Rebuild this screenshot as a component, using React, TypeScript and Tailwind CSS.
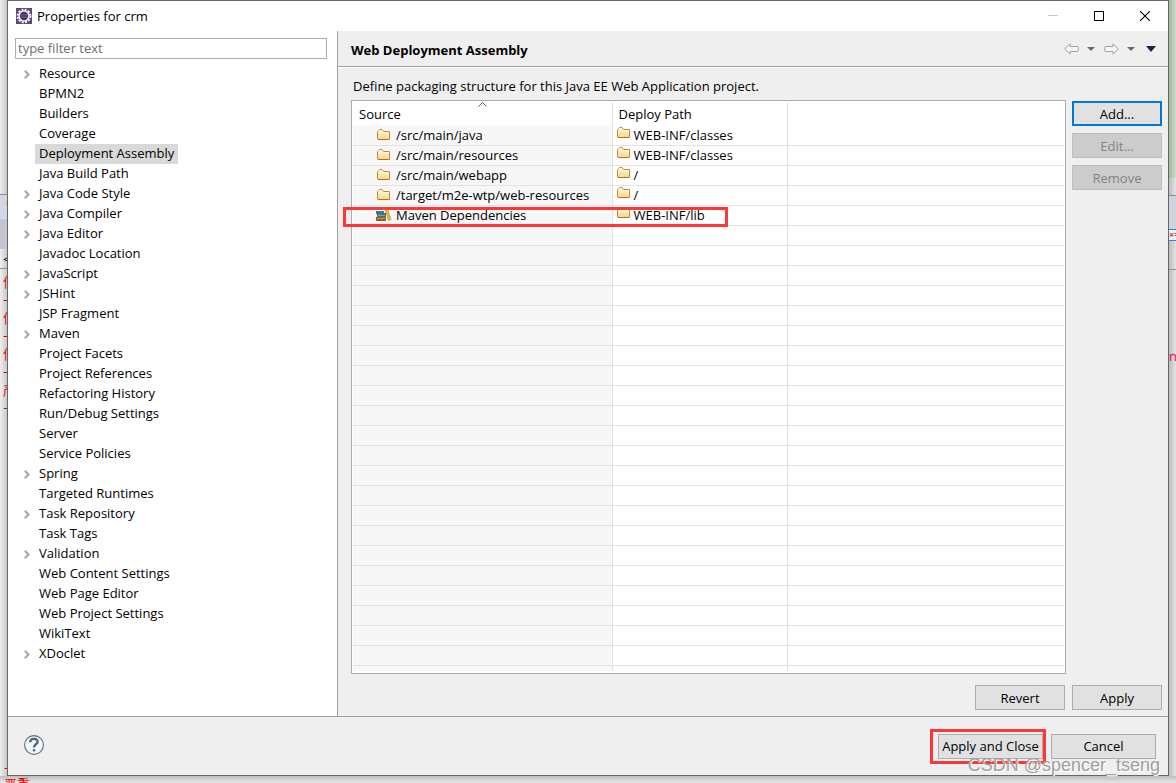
import React from 'react';

interface TreeNode {
  label: string;
  expandable?: boolean;
}

interface Mapping {
  source: string;
  path: string;
  library?: boolean;
}

const tree: TreeNode[] = [
  { label: 'Resource', expandable: true },
  { label: 'BPMN2' },
  { label: 'Builders' },
  { label: 'Coverage' },
  { label: 'Deployment Assembly' },
  { label: 'Java Build Path' },
  { label: 'Java Code Style', expandable: true },
  { label: 'Java Compiler', expandable: true },
  { label: 'Java Editor', expandable: true },
  { label: 'Javadoc Location' },
  { label: 'JavaScript', expandable: true },
  { label: 'JSHint', expandable: true },
  { label: 'JSP Fragment' },
  { label: 'Maven', expandable: true },
  { label: 'Project Facets' },
  { label: 'Project References' },
  { label: 'Refactoring History' },
  { label: 'Run/Debug Settings' },
  { label: 'Server' },
  { label: 'Service Policies' },
  { label: 'Spring', expandable: true },
  { label: 'Targeted Runtimes' },
  { label: 'Task Repository', expandable: true },
  { label: 'Task Tags' },
  { label: 'Validation', expandable: true },
  { label: 'Web Content Settings' },
  { label: 'Web Page Editor' },
  { label: 'Web Project Settings' },
  { label: 'WikiText' },
  { label: 'XDoclet', expandable: true },
];

const mappings: Mapping[] = [
  { source: '/src/main/java', path: 'WEB-INF/classes' },
  { source: '/src/main/resources', path: 'WEB-INF/classes' },
  { source: '/src/main/webapp', path: '/' },
  { source: '/target/m2e-wtp/web-resources', path: '/' },
  { source: 'Maven Dependencies', path: 'WEB-INF/lib', library: true },
];

const EMPTY_ROWS = 22;

const EclipseIcon = () => (
  <svg width="16" height="16" viewBox="0 0 16 16" aria-hidden="true">
    <rect width="16" height="16" fill="#5b4778" />
    <circle cx="8" cy="8" r="6.4" fill="none" stroke="#f4f1f8" strokeWidth="2" strokeDasharray="2 1.35" />
    <circle cx="8" cy="8" r="5" fill="#3b3060" stroke="#f4f1f8" strokeWidth="1.6" />
    <path d="M4 6.5h8M3.8 8h8.4M4 9.5h8" stroke="#75649c" strokeWidth="0.7" />
  </svg>
);

const FolderIcon = () => (
  <svg width="14" height="12" viewBox="0 0 14 12" className="shrink-0" aria-hidden="true">
    <defs>
      <linearGradient id="folder" x1="0" y1="0" x2="0" y2="1">
        <stop offset="0" stopColor="#fffbe2" />
        <stop offset="1" stopColor="#fbd583" />
      </linearGradient>
    </defs>
    <path
      d="M.5 10V2.5L1.5 1.5 2.5.5H5L6.5 2.5H12.5V10L11.5 10.5H1.5Z"
      fill="url(#folder)"
      stroke="#c08a3c"
    />
    <path d="M1.5 3.5H12" stroke="#fff8d8" />
    <path d="M1 10.5H12.5" stroke="#b0702a" />
  </svg>
);

const LibraryIcon = () => (
  <svg width="16" height="12" viewBox="0 0 16 12" className="shrink-0" aria-hidden="true">
    <rect x="0" y="2" width="8" height="3" fill="#2f79a8" />
    <rect x="1" y="4" width="9" height="4" fill="#347f6d" />
    <path d="M2 6.5H9" stroke="#68b39a" />
    <rect x="0" y="8" width="10" height="4" fill="#a85032" />
    <path d="M1 9.5H9" stroke="#d78a5f" />
    <path d="M9 .5 11.5 0 15 10.5 12.5 11.5Z" fill="#eeb54b" stroke="#b87822" strokeWidth="0.6" />
  </svg>
);

const ArrowIcon = ({ flip }: { flip?: boolean }) => (
  <svg width="15" height="12" viewBox="0 0 15 12" className={flip ? '-scale-x-100' : ''} aria-hidden="true">
    <path
      d="M.8 6 6 .8V3.5H13.5L14.2 4V8L13.5 8.5H6V11.2Z"
      fill="#f7f7f7"
      stroke="#a0a0a0"
      strokeLinejoin="round"
    />
  </svg>
);

const Triangle = ({ dark }: { dark?: boolean }) => (
  <svg width={dark ? 10 : 8} height={dark ? 6 : 4} viewBox="0 0 8 4" preserveAspectRatio="none" aria-hidden="true">
    <path d="M0 0H8L4 4Z" fill={dark ? '#33184f' : '#6c6c70'} />
  </svg>
);

const Chevron = () => (
  <svg width="6" height="9" viewBox="0 0 6 9" fill="none" aria-hidden="true">
    <path d="M.8.8 4.5 4.5.8 8.2" stroke="#a6a6a6" strokeWidth="2" />
  </svg>
);

const HelpIcon = () => (
  <svg width="20" height="20" viewBox="0 0 20 20" fill="none" aria-hidden="true">
    <circle cx="10" cy="10" r="9.4" fill="#f6f7f9" stroke="#596b8c" strokeWidth="1.1" />
    <path
      d="M6.2 7.3C6.2 2.7 13.6 2.8 13.6 6.8C13.6 9.3 10 9.3 10 12.4"
      stroke="#536486"
      strokeWidth="2.4"
    />
    <rect x="8.8" y="14" width="2.5" height="2.5" rx="0.8" fill="#536486" />
  </svg>
);

interface ButtonProps {
  children: React.ReactNode;
  primary?: boolean;
  disabled?: boolean;
  wide?: boolean;
}

const Button: React.FC<ButtonProps> = ({ children, primary, disabled, wide }) => (
  <button
    type="button"
    disabled={disabled}
    className={`flex h-[25px] items-center justify-center whitespace-nowrap ${wide ? 'w-[105px]' : 'w-[90px]'} ${
      primary
        ? 'border-2 border-[#0078d7] bg-[#e1e1e1]'
        : disabled
          ? 'border border-[#bfbfbf] bg-[#cccccc] text-[#838383]'
          : 'border border-[#adadad] bg-[#e1e1e1]'
    }`}
  >
    {children}
  </button>
);

const TitleBar = () => (
  <header className="flex h-[30px] shrink-0 items-center bg-white pb-px pl-2">
    <EclipseIcon />
    <h1 className="ml-[5px] flex-1">Properties for crm</h1>
    <button type="button" aria-label="Minimize" disabled className="flex h-full w-[46px] items-center justify-center">
      <svg width="10" height="1" aria-hidden="true">
        <rect width="10" height="1" fill="#c4c4c4" />
      </svg>
    </button>
    <button type="button" aria-label="Maximize" className="flex h-full w-[46px] items-center justify-center">
      <svg width="10" height="10" aria-hidden="true">
        <rect x=".5" y=".5" width="9" height="9" fill="none" stroke="#000" />
      </svg>
    </button>
    <button type="button" aria-label="Close" className="flex h-full w-[46px] items-center justify-center">
      <svg width="10" height="10" aria-hidden="true">
        <path d="M0 0 10 10M10 0 0 10" stroke="#000" strokeWidth="1.1" />
      </svg>
    </button>
  </header>
);

const Sidebar = () => (
  <aside className="w-[330px] shrink-0 border-r border-[#a0a0a0] bg-white px-[7px] pt-[7px]">
    <input
      type="text"
      aria-label="Filter"
      placeholder="type filter text"
      className="block h-[21px] w-[312px] border border-[#abadb3] px-0.5 pb-0.5 placeholder:text-[#6d6d6d]"
    />
    <ul className="mt-[5px] pb-8">
      {tree.map(node => (
        <li key={node.label} className="flex h-5 items-center">
          <span className="flex w-5 shrink-0 justify-center pl-[3px]">{node.expandable && <Chevron />}</span>
          <button
            type="button"
            className={`h-5 px-1 pb-0.5 leading-[18px] ${node.label === 'Deployment Assembly' ? 'bg-[#d9d9d9]' : ''}`}
          >
            {node.label}
          </button>
        </li>
      ))}
    </ul>
  </aside>
);

const MappingTable = () => (
  <div className="relative flex-1 border border-[#abadb3] bg-white p-px">
    <table className="w-full table-fixed border-collapse text-left">
      <colgroup>
        <col className="w-[259px]" />
        <col className="w-[175px]" />
        <col />
      </colgroup>
      <thead>
        <tr className="h-[23px]">
          <th className="relative border-r border-[#e2e2e2] p-0 pl-1.5 font-normal leading-[22px]">
            Source
            <svg width="9" height="5" className="absolute top-0 left-1/2 -ml-1" fill="none" aria-hidden="true">
              <path d="M.5 4.5 4.5.5 8.5 4.5" stroke="#5c5c5c" />
            </svg>
          </th>
          <th className="border-r border-[#e2e2e2] p-0 pl-1.5 font-normal leading-[22px]">Deploy Path</th>
          <th className="p-0" />
        </tr>
      </thead>
      <tbody>
        {mappings.map(row => (
          <tr key={row.source} className="h-5 border-b border-[#e2e2e2]">
            <td className="border-r border-[#e2e2e2] bg-[#f7f7f7] p-0">
              <div className={`flex h-[19px] items-center ${row.library ? 'gap-1 pl-[23px]' : 'gap-[5px] pl-6'}`}>
                {row.library ? <LibraryIcon /> : <FolderIcon />}
                {row.source}
              </div>
            </td>
            <td className="border-r border-[#e2e2e2] p-0">
              <div className="flex h-[19px] items-center gap-[3px] pl-1">
                <span className="pb-1">
                  <FolderIcon />
                </span>
                {row.path}
              </div>
            </td>
            <td className="p-0" />
          </tr>
        ))}
        {Array.from({ length: EMPTY_ROWS }, (_, i) => (
          <tr key={i} className="h-5 border-b border-[#e2e2e2]">
            <td className="border-r border-[#e2e2e2] bg-[#f7f7f7] p-0" />
            <td className="border-r border-[#e2e2e2] p-0" />
            <td className="p-0" />
          </tr>
        ))}
        <tr className="h-1.5">
          <td className="border-r border-[#e2e2e2] bg-[#f7f7f7] p-0" />
          <td className="border-r border-[#e2e2e2] p-0" />
          <td className="p-0" />
        </tr>
      </tbody>
    </table>
    {/* highlight around the Maven Dependencies row */}
    <div className="pointer-events-none absolute top-[106px] -left-[9px] h-5 w-[385px] border-3 border-[#fd3737]" />
  </div>
);

const AssemblyPage = () => (
  <main className="flex min-w-0 flex-1 flex-col">
    <div className="flex h-[36px] items-center justify-between border-b border-[#a0a0a0] pr-3 pl-[13px]">
      <h2 className="pt-0.5 font-bold">Web Deployment Assembly</h2>
      <div className="flex items-center">
        <button type="button" aria-label="Back">
          <ArrowIcon />
        </button>
        <button type="button" aria-label="Back history" className="ml-2">
          <Triangle />
        </button>
        <button type="button" aria-label="Forward" className="ml-[9px]">
          <ArrowIcon flip />
        </button>
        <button type="button" aria-label="Forward history" className="ml-2">
          <Triangle />
        </button>
        <button type="button" aria-label="View menu" className="ml-[11px]">
          <Triangle dark />
        </button>
      </div>
    </div>
    <div className="flex flex-1 flex-col border-t border-white pr-1.5 pb-1.5 pl-[13px]">
      <p className="h-8 pt-2 pl-0.5 leading-5">
        Define packaging structure for this Java EE Web Application project.
      </p>
      <div className="flex flex-1 gap-1.5">
        <MappingTable />
        <div className="flex flex-col gap-[7px] pt-px">
          <Button primary>Add...</Button>
          <Button disabled>Edit...</Button>
          <Button disabled>Remove</Button>
        </div>
      </div>
      <div className="mt-[11px] flex justify-end gap-[7px]">
        <Button>Revert</Button>
        <Button>Apply</Button>
      </div>
    </div>
  </main>
);

const Footer = () => (
  <footer className="flex h-[59px] shrink-0 items-center justify-between border-t border-[#a0a0a0] pr-3 pb-0.5 pl-4">
    <button type="button" aria-label="Help">
      <HelpIcon />
    </button>
    <div className="flex gap-2 pt-0.5">
      <div className="relative">
        <Button wide>Apply and Close</Button>
        <div className="pointer-events-none absolute -inset-y-[5px] -right-[3px] -left-2 border-3 border-[#fd3737]" />
      </div>
      <Button wide>Cancel</Button>
    </div>
  </footer>
);

// Slivers of the editor window that stay visible behind the dialog
const consoleGlyphs = ['信', '一', '信', '一', '信', '一', '严'];

const LeftEdge = () => (
  <div className="flex flex-col overflow-hidden bg-gradient-to-r from-[#efefef] to-[#c9c9c9]">
    <div className="h-[195px] border-b border-[#8f8f8f]" />
    <div className="h-6 bg-[#d3d6e4] pl-1.5 text-[#b8893d]">●</div>
    <div className="h-[30px] bg-[#c3c6d0]" />
    <div className="h-5 border-b border-[#8f8f8f] pl-[3px] leading-5">&lt;</div>
    <div className="pt-1 pl-[3px] text-[#ee0000]">
      {consoleGlyphs.map((glyph, i) => (
        <div key={i} className="h-[18px] w-5 leading-[18px]">
          {glyph}
        </div>
      ))}
      <div className="h-[18px] w-5 leading-[18px] text-[#0063b1]">一</div>
    </div>
    <div className="flex flex-1 items-end pl-1 text-[#ee0000]">一</div>
  </div>
);

const RightEdge = () => (
  <div className="flex flex-col overflow-hidden bg-gradient-to-r from-[#bcbcbc] to-[#e4e4e4]">
    <div className="h-[178px] bg-gradient-to-r from-[#a4b5a4] to-[#cbe1cb]" />
    <div className="h-[18px] border-b border-[#8f8f8f]" />
    <div className="h-[33px] bg-[#d0d2dc]" />
    <div className="h-3 overflow-hidden border-y border-[#3f7fc4] bg-[#e6effa] text-[9px] leading-[10px] font-bold text-[#c63b35]">
      ×=
    </div>
    <div className="h-[29px] border-b border-[#8f8f8f]" />
    <div className="pt-[76px] leading-5 text-[#f00050]">n</div>
  </div>
);

const App: React.FC = () => (
  <div className="relative grid min-h-screen grid-cols-[7px_minmax(0,1fr)_7px] grid-rows-[1fr_7px] overflow-hidden bg-[#dcdcdc] font-['Open_Sans','Noto_Sans_CJK_SC',sans-serif] text-[13px] leading-4 text-black">
    <LeftEdge />
    <div className="flex flex-col border border-[#666666] bg-[#efefef]">
      <TitleBar />
      <div className="flex flex-1">
        <Sidebar />
        <AssemblyPage />
      </div>
      <Footer />
    </div>
    <RightEdge />
    <div className="col-span-3 flex h-[7px] overflow-hidden bg-gradient-to-b from-[#bdbdbd] to-[#e6e6e6] pl-1 leading-4 text-[#ee0000]">
      严重
    </div>
    <div className="pointer-events-none absolute right-4 bottom-2 font-['Liberation_Sans',sans-serif] text-[18px] leading-5 text-[#a0a0a0] [text-shadow:1px_1px_0_#ffffff]">
      CSDN @spencer_tseng
    </div>
  </div>
);

export default App;
